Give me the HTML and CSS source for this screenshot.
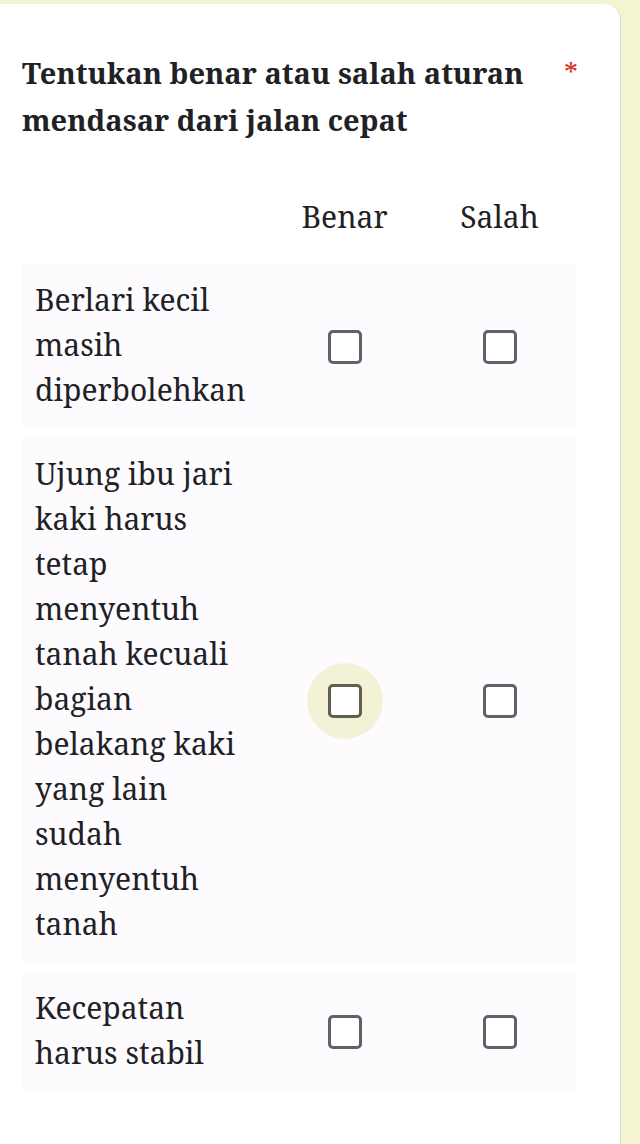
FILE: index.html
```html
<!DOCTYPE html>
<html lang="id">
<head>
    <meta charset="UTF-8">
    <meta name="viewport" content="width=device-width, initial-scale=1.0">
    <title>Tentukan benar atau salah</title>
    <link rel="stylesheet" href="styles.css">
</head>
<body>
    <div class="card">
        <div class="question">
            <h2 class="question-title">Tentukan benar atau salah aturan mendasar dari jalan cepat</h2>
            <span class="required">*</span>
        </div>

        <div class="grid">
            <div class="grid-head">
                <div class="cell-label"></div>
                <div class="cell-col">Benar</div>
                <div class="cell-col">Salah</div>
            </div>

            <div class="grid-row">
                <div class="cell-label">Berlari kecil masih diperbolehkan</div>
                <div class="cell-col"><span class="box"></span></div>
                <div class="cell-col"><span class="box"></span></div>
            </div>
            <div class="grid-row">
                <div class="cell-label">Ujung ibu jari kaki harus tetap menyentuh tanah kecuali bagian belakang kaki yang lain sudah menyentuh tanah</div>
                <div class="cell-col"><span class="box focused"></span></div>
                <div class="cell-col"><span class="box"></span></div>
            </div>
            <div class="grid-row">
                <div class="cell-label">Kecepatan harus stabil</div>
                <div class="cell-col"><span class="box"></span></div>
                <div class="cell-col"><span class="box"></span></div>
            </div>
        </div>
    </div>
</body>
</html>
```

FILE: styles.css
```css
body {
    margin: 0;
    padding: 0;
    background-color: #f5f4d2;
    font-family: "Noto Serif", "DejaVu Serif", serif;
    color: #202124;
}
.card {
    margin-top: 4px;
    width: 621px;
    min-height: 1140px;
    background-color: #fff;
    border-right: 1px solid #dadada;
    border-top-right-radius: 16px;
    padding: 45px 0 0 22px;
    box-sizing: border-box;
}
.question {
    display: flex;
    align-items: flex-start;
    padding-right: 42px;
}
.question-title {
    flex: 1;
    margin: 0;
    font-size: 29px;
    line-height: 47px;
    font-weight: bold;
}
.required {
    color: #d93025;
    font-size: 28px;
    line-height: 46px;
}
.grid {
    width: 555px;
    margin-top: 51px;
}
.grid-head,
.grid-row {
    display: flex;
    align-items: center;
    font-size: 30px;
    line-height: 45px;
}
.grid-head {
    padding-bottom: 24px;
}
.grid-row {
    background-color: #fdfbfe;
    margin-bottom: 9px;
    padding: 14px 0 16px;
}
.cell-label {
    width: 245px;
    padding-left: 13px;
    padding-right: 12px;
    box-sizing: border-box;
}
.cell-col {
    width: 155px;
    display: flex;
    justify-content: center;
    align-items: center;
}
.grid-row .cell-col {
    position: relative;
    z-index: 0;
    padding-top: 4px;
}
.box {
    position: relative;
    display: block;
    width: 34px;
    height: 34px;
    border: 3px solid #5f6368;
    border-radius: 5px;
    box-sizing: border-box;
    background-color: #fff;
}
.box.focused {
    border-color: #5f5f52;
}
.box.focused::before {
    content: "";
    position: absolute;
    left: -24px;
    top: -24px;
    width: 76px;
    height: 76px;
    border-radius: 50%;
    background-color: #f4f2d6;
    z-index: -1;
}
```
